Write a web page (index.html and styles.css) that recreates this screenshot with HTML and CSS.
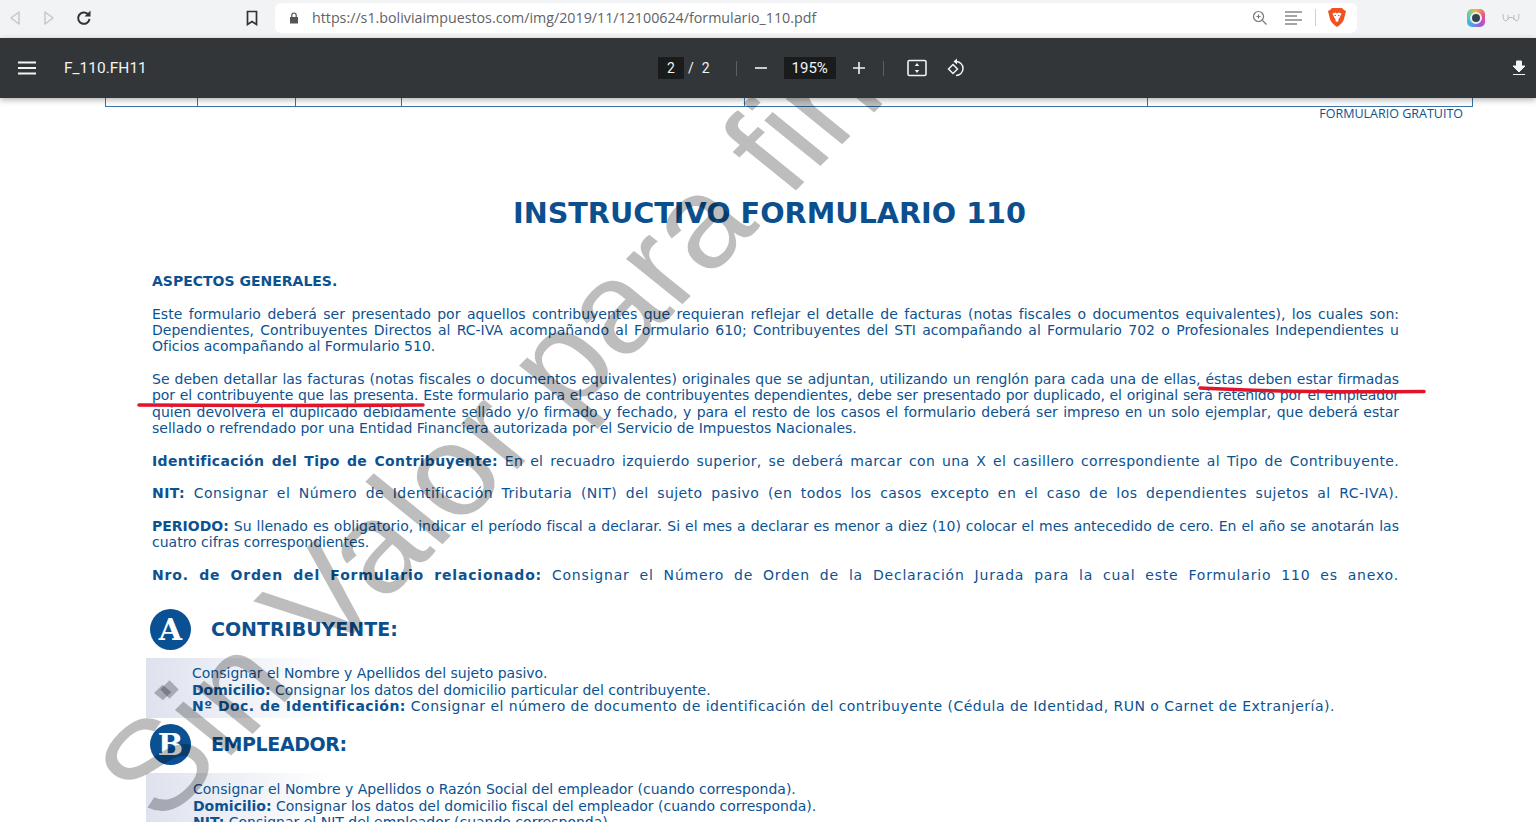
FILE: index.html
```html
<!DOCTYPE html>
<html lang="es">
<head>
<meta charset="utf-8">
<title>F_110.FH11</title>
<link rel="stylesheet" href="styles.css">
</head>
<body>
<header class="browser">
  <div class="nav">
    <svg class="ic" width="16" height="16" viewBox="0 0 16 16"><path d="M12 2 4 8l8 6z" fill="none" stroke="#c4c6c9" stroke-width="1.4" stroke-linejoin="round"/></svg>
    <svg class="ic" width="16" height="16" viewBox="0 0 16 16"><path d="m4 2 8 6-8 6z" fill="none" stroke="#c4c6c9" stroke-width="1.4" stroke-linejoin="round"/></svg>
    <svg class="ic" width="18" height="18" viewBox="0 0 18 18"><path d="M14.500 10a5.700 5.700 0 1 1-1.700-5" fill="none" stroke="#333" stroke-width="2"/><path d="M15.500 1.500v6h-6z" fill="#333"/></svg>
  </div>
  <svg class="bookmark" width="14" height="16" viewBox="0 0 14 16"><path d="M2.500 1.500h9v13L7 11.500l-4.500 3z" fill="none" stroke="#333" stroke-width="1.700"/></svg>
  <div class="omnibox">
    <svg width="10" height="12" viewBox="0 0 10 12"><path d="M1 5h8v6.500H1z" fill="#555"/><path d="M2.800 5V3.200a2.200 2.200 0 0 1 4.400 0V5" fill="none" stroke="#555" stroke-width="1.200"/></svg>
    <span class="url">https://s1.boliviaimpuestos.com/img/2019/11/12100624/formulario_110.pdf</span>
    <svg class="push" width="16" height="16" viewBox="0 0 16 16"><circle cx="6.500" cy="6.500" r="5" fill="none" stroke="#777" stroke-width="1.200"/><path d="m10.500 10.500 4 4M4.500 6.500h4M6.500 4.500v4" stroke="#777" stroke-width="1.200"/></svg>
    <svg width="18" height="14" viewBox="0 0 18 14"><path d="M0 1h17M0 5h12M0 9h17M0 13h12" stroke="#888" stroke-width="1.400"/></svg>
    <span class="sep"></span>
    <svg width="18" height="21" viewBox="0 0 18 21"><path d="M4 1h10l2 2 2 1-2 8q-1 4-7 8-6-4-7-8L0 4l2-1z" fill="#f1501f"/><path d="M4.500 6.500l3-1L9 6.500l1.500-1 3 1-2 4.500-1 1v2l-1.500 1-1.500-1v-2l-1-1z" fill="#fff"/><path d="M6.500 8.500h1.500M10 8.500h1.500" stroke="#f1501f" stroke-width="1"/></svg>
  </div>
  <div class="exts">
    <span class="camera"><span class="lens"></span></span>
    <svg width="18" height="12" viewBox="0 0 18 12"><path d="M1 2q0 7 3 7l4-4 1 1 1-1 4 4q3 0 3-7M6 3v5M12 3v5" fill="none" stroke="#bbb" stroke-width="1"/></svg>
  </div>
</header>

<nav class="pdfbar">
  <svg class="menu" width="18" height="14" viewBox="0 0 18 14"><path d="M0 1.500h18M0 7h18M0 12.500h18" stroke="#f1f3f4" stroke-width="2"/></svg>
  <span class="docname">F_110.FH11</span>
  <div class="controls">
    <span class="field pagefield">2</span>
    <span class="slash">/</span>
    <span class="total">2</span>
    <span class="bar-sep first"></span>
    <svg width="14" height="14" viewBox="0 0 14 14"><path d="M1 7h12" stroke="#f1f3f4" stroke-width="1.600"/></svg>
    <span class="field zoomfield">195%</span>
    <svg width="14" height="14" viewBox="0 0 14 14"><path d="M1 7h12M7 1v12" stroke="#f1f3f4" stroke-width="1.600"/></svg>
    <span class="bar-sep second"></span>
    <svg class="fit" width="20" height="18" viewBox="0 0 20 18"><rect x="1" y="1.500" width="18" height="15" rx="1.500" fill="none" stroke="#f1f3f4" stroke-width="1.600"/><path d="m10 4 2.200 3h-4.400zM10 14l2.200-3H7.800z" fill="#f1f3f4"/></svg>
    <svg class="rotate" width="20" height="20" viewBox="0 0 20 20"><path d="M10 3.500a7 7 0 1 1 0 14" fill="none" stroke="#f1f3f4" stroke-width="1.500"/><path d="M11 .5v6L7.500 3.500z" fill="#f1f3f4"/><path d="m7 6.500 4.500 4.500L7 15.500 2.500 11z" fill="none" stroke="#f1f3f4" stroke-width="1.500"/></svg>
  </div>
  <svg class="download" width="14" height="16" viewBox="0 0 14 16"><path d="M4.500 1h5v5H13L7 12 1 6h3.500zM1 14.500h12" fill="#f1f3f4" stroke="#f1f3f4" stroke-width="1"/></svg>
</nav>

<main class="viewer">
  <div class="form-end">
    <span class="cell c1"></span><span class="cell c2"></span><span class="cell c3"></span><span class="cell c4"></span><span class="cell c5"></span><span class="cell c6"></span>
  </div>
  <p class="gratuito">FORMULARIO GRATUITO</p>
  <h1 class="title">INSTRUCTIVO FORMULARIO 110</h1>

  <section class="body">
    <h2 class="lead">ASPECTOS GENERALES.</h2>
    <div class="para">
      <div class="j">Este formulario deberá ser presentado por aquellos contribuyentes que requieran reflejar el detalle de facturas (notas fiscales o documentos equivalentes), los cuales son:</div>
      <div class="j">Dependientes, Contribuyentes Directos al RC-IVA acompañando al Formulario 610; Contribuyentes del STI acompañando al Formulario 702 o Profesionales Independientes u</div>
      <div>Oficios acompañando al Formulario 510.</div>
    </div>
    <div class="para">
      <div class="j">Se deben detallar las facturas (notas fiscales o documentos equivalentes) originales que se adjuntan, utilizando un renglón para cada una de ellas, éstas deben estar firmadas</div>
      <div class="j tight">por el contribuyente que las presenta. Este formulario para el caso de contribuyentes dependientes, debe ser presentado por duplicado, el original será retenido por el empleador</div>
      <div class="j">quien devolverá el duplicado debidamente sellado y/o firmado y fechado, y para el resto de los casos el formulario deberá ser impreso en un solo ejemplar, que deberá estar</div>
      <div>sellado o refrendado por una Entidad Financiera autorizada por el Servicio de Impuestos Nacionales.</div>
    </div>
    <div class="para"><div class="j loose-a"><b>Identificación del Tipo de Contribuyente:</b> En el recuadro izquierdo superior, se deberá marcar con una X el casillero correspondiente al Tipo de Contribuyente.</div></div>
    <div class="para"><div class="j loose-b"><b>NIT:</b> Consignar el Número de Identificación Tributaria (NIT) del sujeto pasivo (en todos los casos excepto en el caso de los dependientes sujetos al RC-IVA).</div></div>
    <div class="para">
      <div class="j"><b>PERIODO:</b> Su llenado es obligatorio, indicar el período fiscal a declarar. Si el mes a declarar es menor a diez (10) colocar el mes antecedido de cero. En el año se anotarán las</div>
      <div>cuatro cifras correspondientes.</div>
    </div>
    <div class="para"><div class="j loose-c"><b>Nro. de Orden del Formulario relacionado:</b> Consignar el Número de Orden de la Declaración Jurada para la cual este Formulario 110 es anexo.</div></div>
  </section>

  <section class="block block-a">
    <div class="head"><span class="badge">A</span><h2>CONTRIBUYENTE:</h2></div>
    <div class="shade">
      <span class="diamond"></span>
      <div class="items">
        <div>Consignar el Nombre y Apellidos del sujeto pasivo.</div>
        <div><b>Domicilio:</b> Consignar los datos del domicilio particular del contribuyente.</div>
        <div class="loose-d"><b>Nº Doc. de Identificación:</b> Consignar el número de documento de identificación del contribuyente (Cédula de Identidad, RUN o Carnet de Extranjería).</div>
      </div>
    </div>
  </section>
  <section class="block block-b">
    <div class="head"><span class="badge">B</span><h2>EMPLEADOR:</h2></div>
    <div class="shade">
      <div class="items">
        <div>Consignar el Nombre y Apellidos o Razón Social del empleador (cuando corresponda).</div>
        <div><b>Domicilio:</b> Consignar los datos del domicilio fiscal del empleador (cuando corresponda).</div>
        <div><b>NIT:</b> Consignar el NIT del empleador (cuando corresponda).</div>
      </div>
    </div>
  </section>

  <div class="watermark">Sin Valor para fines</div>
  <svg class="marks" width="1536" height="822" viewBox="0 0 1536 822"><path d="M1200 388q90 5 224 3.500M139 405q140 1 284 0" fill="none" stroke="#e0142a" stroke-width="3.500" stroke-linecap="round"/></svg>
</main>
</body>
</html>
```
FILE: styles.css
```css
* { box-sizing: border-box; margin: 0; padding: 0; }
html, body { width: 1536px; height: 822px; overflow: hidden; background: #fff; }
body { font-family: "DejaVu Sans", Verdana, sans-serif; color: #0c5291; }

.browser { height: 38px; padding-bottom: 3px; background: #f2f3f4; display: flex; align-items: center; font-family: "Open Sans", sans-serif; }
.nav { display: flex; align-items: center; gap: 18px; margin-left: 7px; width: 238px; }
.bookmark { margin-right: 16px; }
.omnibox { width: 1082px; height: 30px; background: #fff; border-radius: 6px; display: flex; align-items: center; padding: 0 11px 0 14px; }
.url { margin-left: 13px; font-size: 14.250px; color: #5f6368; }
.push { margin-left: auto; margin-right: 17px; }
.sep { width: 1px; height: 17px; background: #d0d0d0; margin: 0 12px 0 12px; }
.exts { display: flex; align-items: center; gap: 17px; margin-left: 110px; }
.camera { width: 18px; height: 18px; border-radius: 5px; display: flex; align-items: center; justify-content: center; background: conic-gradient(#f0b93a, #e8508f, #a855d8, #4aa8e8, #52d0b8, #f0b93a); }
.lens { width: 12px; height: 12px; border-radius: 50%; background: #34444f; border: 2px solid #e8eef2; }

.pdfbar { position: relative; z-index: 3; height: 60px; background: #323639; color: #f1f3f4; display: flex; align-items: center; font-family: "Roboto", sans-serif; box-shadow: 0 2px 6px rgba(0,0,0,.3); }
.menu { margin-left: 18px; }
.docname { margin-left: 28px; font-size: 15.500px; }
.controls { position: absolute; left: 658px; top: 0; height: 60px; display: flex; align-items: center; font-size: 14px; }
.field { height: 22px; background: #191b1c; display: flex; align-items: center; justify-content: center; }
.pagefield { width: 26px; }
.slash { margin-left: 4px; }
.total { margin-left: 8px; }
.bar-sep { width: 1px; height: 15px; background: #5c6063; }
.bar-sep.first { margin: 0 17px 0 26px; }
.bar-sep.second { margin: 0 23px 0 17px; }
.zoomfield { width: 52px; margin: 0 16px 0 16px; font-size: 15px; }
.rotate { margin-left: 19px; }
.download { position: absolute; right: 10px; top: 22px; }

.viewer { position: relative; height: 724px; overflow: hidden; }
.form-end { margin-left: 105px; width: 1368px; height: 9px; border: solid #3c74a8; border-width: 0 1.500px 1.500px; display: flex; }
.cell { display: block; height: 100%; border-right: 1.500px solid #3c74a8; }
.c1 { width: 92px; } .c2 { width: 98px; } .c3 { width: 106px; } .c4 { width: 343px; } .c5 { width: 403px; }
.c6 { border: 0; }
.gratuito { font-family: "Open Sans", sans-serif; font-size: 12.500px; line-height: 16px; text-align: right; padding-right: 73px; margin-top: -1px; }
.title { font-size: 28.700px; line-height: 36px; text-align: center; margin: 73px 0 0 3px; font-weight: 700; color: #0b4f8e; }

.body { margin: 42px 0 0 152px; width: 1247px; font-size: 14px; line-height: 16.330px; }
.lead { font-size: 14px; line-height: 16.330px; margin-bottom: 16.330px; font-weight: 700; }
.para { margin-bottom: 16.330px; }
.j { text-align: justify; text-align-last: justify; }
.tight { letter-spacing: -.12px; }
.loose-a { letter-spacing: .35px; }
.loose-b { letter-spacing: .45px; }
.loose-c { letter-spacing: .8px; }
.loose-d { letter-spacing: .47px; }

.block { width: 1390px; margin-left: 146px; }
.block-a { margin-top: 26px; }
.block-b { margin-top: 6px; }
.head { display: flex; align-items: center; height: 40px; padding-left: 4px; }
.badge { width: 41px; height: 41px; border-radius: 50%; background: #0a5193; color: #fff; font-family: "DejaVu Serif", serif; font-weight: 700; font-size: 30px; display: flex; align-items: center; justify-content: center; flex: none; }
.head h2 { font-size: 19px; margin-left: 20px; font-weight: 700; color: #0b4f8e; }
.block-b h2 { letter-spacing: -.4px; }
.shade { margin-top: 9px; height: 60px; position: relative; padding: 7px 0 0 46px; font-size: 14px; line-height: 16.330px; background: linear-gradient(90deg, #dee2ee 0, #fff 184px); }
.diamond { position: absolute; left: 17px; top: 25px; width: 13px; height: 13px; background: #a9a9b8; transform: rotate(45deg); }
.items { white-space: nowrap; }
.block-b .shade { margin-top: 9px; padding: 8px 0 0 47px; }

.watermark { position: absolute; left: 161px; top: 619px; font-family: "Liberation Sans", sans-serif; font-size: 129px; line-height: 1; white-space: nowrap; color: rgba(0,0,0,.26); transform-origin: 0 .8465em; transform: scaleX(1.11) rotate(-48deg); pointer-events: none; }
.marks { position: absolute; left: 0; top: -98px; pointer-events: none; }
```
